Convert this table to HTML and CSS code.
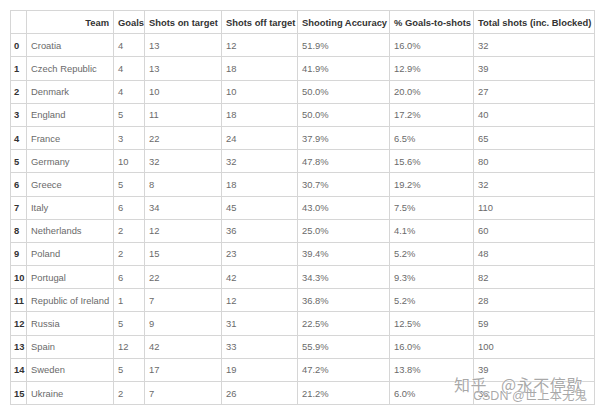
FILE: index.html
```html
<!DOCTYPE html>
<html>
<head>
<meta charset="utf-8">
<link rel="stylesheet" href="styles.css">
</head>
<body>
<div class="wrap">
<table class="df">
<colgroup>
<col class="c-idx"><col class="c-team"><col class="c-goals"><col class="c-on"><col class="c-off"><col class="c-acc"><col class="c-pct"><col class="c-tot">
</colgroup>
<thead>
<tr><th></th><th class="team">Team</th><th>Goals</th><th>Shots on target</th><th>Shots off target</th><th>Shooting Accuracy</th><th>% Goals-to-shots</th><th>Total shots (inc. Blocked)</th></tr>
</thead>
<tbody>
<tr><th>0</th><td>Croatia</td><td>4</td><td>13</td><td>12</td><td>51.9%</td><td>16.0%</td><td>32</td></tr>
<tr><th>1</th><td>Czech Republic</td><td>4</td><td>13</td><td>18</td><td>41.9%</td><td>12.9%</td><td>39</td></tr>
<tr><th>2</th><td>Denmark</td><td>4</td><td>10</td><td>10</td><td>50.0%</td><td>20.0%</td><td>27</td></tr>
<tr><th>3</th><td>England</td><td>5</td><td>11</td><td>18</td><td>50.0%</td><td>17.2%</td><td>40</td></tr>
<tr><th>4</th><td>France</td><td>3</td><td>22</td><td>24</td><td>37.9%</td><td>6.5%</td><td>65</td></tr>
<tr><th>5</th><td>Germany</td><td>10</td><td>32</td><td>32</td><td>47.8%</td><td>15.6%</td><td>80</td></tr>
<tr><th>6</th><td>Greece</td><td>5</td><td>8</td><td>18</td><td>30.7%</td><td>19.2%</td><td>32</td></tr>
<tr><th>7</th><td>Italy</td><td>6</td><td>34</td><td>45</td><td>43.0%</td><td>7.5%</td><td>110</td></tr>
<tr><th>8</th><td>Netherlands</td><td>2</td><td>12</td><td>36</td><td>25.0%</td><td>4.1%</td><td>60</td></tr>
<tr><th>9</th><td>Poland</td><td>2</td><td>15</td><td>23</td><td>39.4%</td><td>5.2%</td><td>48</td></tr>
<tr><th>10</th><td>Portugal</td><td>6</td><td>22</td><td>42</td><td>34.3%</td><td>9.3%</td><td>82</td></tr>
<tr><th>11</th><td>Republic of Ireland</td><td>1</td><td>7</td><td>12</td><td>36.8%</td><td>5.2%</td><td>28</td></tr>
<tr><th>12</th><td>Russia</td><td>5</td><td>9</td><td>31</td><td>22.5%</td><td>12.5%</td><td>59</td></tr>
<tr><th>13</th><td>Spain</td><td>12</td><td>42</td><td>33</td><td>55.9%</td><td>16.0%</td><td>100</td></tr>
<tr><th>14</th><td>Sweden</td><td>5</td><td>17</td><td>19</td><td>47.2%</td><td>13.8%</td><td>39</td></tr>
<tr><th>15</th><td>Ukraine</td><td>2</td><td>7</td><td>26</td><td>21.2%</td><td>6.0%</td><td>36</td></tr>
</tbody>
</table>
<div class="wm">
<div class="wm1"><span>知乎</span><span class="at">@永不停歇</span></div>
<div class="wm2">CSDN @世上本无鬼</div>
</div>
</div>
</body>
</html>
```
FILE: styles.css
```css
html, body {
  margin: 0;
  padding: 0;
  background: #fff;
}
.wrap {
  position: relative;
  padding: 10px 0 0 10px;
}
.df {
  border-collapse: collapse;
  table-layout: fixed;
  width: 584px;
  font-family: "Liberation Sans", Arial, sans-serif;
  font-size: 9.4px;
  color: #6a6a6a;
}
.df tr {
  height: 23.2px;
}
.df th, .df td {
  border: 1px solid #d6d6d6;
  padding: 0 3px 0 4px;
  text-align: left;
  vertical-align: middle;
  white-space: nowrap;
  overflow: hidden;
}
.df th {
  font-weight: bold;
  color: #333;
}
.df tbody th {
  padding-left: 3px;
}
.df thead th.team {
  text-align: right;
  padding-right: 4px;
}
.c-idx { width: 16px; }
.c-team { width: 87px; }
.c-goals { width: 31px; }
.c-on { width: 77px; }
.c-off { width: 76px; }
.c-acc { width: 92px; }
.c-pct { width: 84px; }
.c-tot { width: 121px; }

.wm {
  position: absolute;
  left: 454px;
  top: 376px;
  font-family: "Noto Sans CJK SC", sans-serif;
  color: rgba(140, 140, 140, 0.75);
  text-shadow: 0 0 1px #fff, 0 0 1px #fff;
  line-height: 1;
}
.wm1 {
  font-size: 16px;
  letter-spacing: 0.5px;
}
.wm1 .at {
  margin-left: 14px;
}
.wm2 {
  font-size: 12.5px;
  margin-left: 19px;
  margin-top: -2px;
  font-family: "Liberation Sans", "Noto Sans CJK SC", sans-serif;
}
```
